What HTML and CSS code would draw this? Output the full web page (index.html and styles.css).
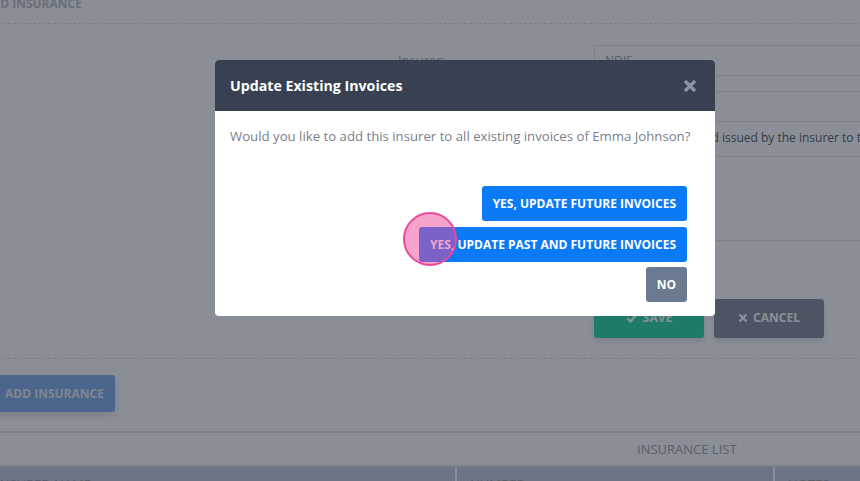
FILE: index.html
```html
<!DOCTYPE html>
<html>
<head>
<link rel="stylesheet" href="styles.css">
</head>
<body>
    <div class="page">
        <div class="panel-title">Add Insurance</div>

        <div class="form">
            <div class="row">
                <label class="label">Insurer:</label>
                <div class="field">
                    <div class="input">NDIS</div>
                </div>
            </div>
            <div class="row row-stack">
                <label class="label">Details:</label>
                <div class="field">
                    <div class="input"></div>
                    <div class="input input-join hint">Printed on the card issued by the insurer to the participant</div>
                    <div class="input input-join textarea"></div>
                </div>
            </div>
            <div class="row">
                <span></span>
                <div class="actions">
                    <span class="btn btn-save">
                        <svg width="12" height="12" viewBox="0 0 12 12"><path d="M1.5 6.5l3 3 6-7" fill="none" stroke="currentColor" stroke-width="2.4"/></svg>
                        Save
                    </span>
                    <span class="btn btn-cancel">
                        <svg width="10" height="10" viewBox="0 0 10 10"><path d="M1.5 1.5l7 7M8.5 1.5l-7 7" stroke="currentColor" stroke-width="2.4"/></svg>
                        Cancel
                    </span>
                </div>
            </div>
        </div>

        <div class="add-bar">
            <span class="btn btn-add">
                <svg width="9" height="9" viewBox="0 0 9 9"><path d="M4.5 0v9M0 4.5h9" stroke="currentColor" stroke-width="2.2"/></svg>
                Add Insurance
            </span>
        </div>

        <div class="list">
            <div class="list-caption">Insurance List</div>
            <div class="list-head">
                <div class="cell c1">Insured Name</div>
                <div class="cell c2">Number</div>
                <div class="cell c3">Notes</div>
            </div>
        </div>
    </div>

    <div class="backdrop"></div>

    <div class="modal">
        <div class="modal-header">
            <span class="modal-title">Update Existing Invoices</span>
            <svg class="modal-close" width="14" height="14" viewBox="0 0 14 14"><path d="M2 2l10 10M12 2L2 12" stroke="currentColor" stroke-width="3.2"/></svg>
        </div>
        <div class="modal-body">
            <p class="modal-text">Would you like to add this insurer to all existing invoices of Emma Johnson?</p>
            <div class="modal-buttons">
                <span class="mbtn mbtn-blue">Yes, update future invoices</span>
                <span class="mbtn mbtn-blue">Yes, update past and future invoices</span>
                <span class="mbtn mbtn-grey">No</span>
            </div>
        </div>
    </div>

    <div class="click-dot"></div>
</body>
</html>
```
FILE: styles.css
```css
body {
    margin: 0;
    background: #fff;
    font-family: "Open Sans", "Liberation Sans", sans-serif;
    overflow: hidden;
}
.page {
    width: 1100px;
    margin: -6px 0 0 -17px;
}
.panel-title {
    height: 29px;
    line-height: 19px;
    font-size: 12px;
    font-weight: bold;
    color: #bcc0c5;
    text-transform: uppercase;
    border-bottom: 1px dashed #dcdde0;
}
.form {
    padding-top: 21px;
}
.row {
    display: grid;
    grid-template-columns: 462px 1fr;
    column-gap: 149px;
}
.row-stack {
    margin-top: 15px;
}
.label {
    text-align: right;
    font-size: 13px;
    line-height: 31px;
    color: #9fa3a9;
}
.input {
    height: 29px;
    border: 1px solid #e3e4e7;
    font-size: 12px;
    line-height: 29px;
    padding: 0 10px;
    color: #9a9ea4;
}
.input-join {
    border-top: none;
}
.hint {
    height: 34px;
    line-height: 32px;
    font-size: 12px;
    padding-left: 16px;
    color: #55595f;
    white-space: nowrap;
    overflow: hidden;
}
.textarea {
    height: 83px;
}
.actions {
    display: flex;
    gap: 10px;
    padding-top: 58px;
}
.btn {
    display: inline-flex;
    align-items: center;
    justify-content: center;
    gap: 5px;
    font-size: 12px;
    font-weight: bold;
    text-transform: uppercase;
    border-radius: 3px;
    color: #fff;
}
.btn-save,
.btn-cancel {
    width: 110px;
    height: 39px;
    padding-bottom: 2px;
    box-sizing: border-box;
    box-shadow: 0 3px 6px rgba(0,0,0,0.12);
}
.btn-save {
    background: #28d8a4;
    color: #fff;
}
.btn-cancel {
    background: #848c9c;
    color: #fff;
}
.add-bar {
    margin-top: 20px;
    border-top: 1px dashed #dcdde0;
    padding: 16px 0 19px;
    border-bottom: 2px solid #dddee1;
}
.btn-add {
    height: 37px;
    padding: 0 11px 0 8px;
    background: #80acea;
    color: #e6ecf2;
    box-shadow: 0 4px 8px rgba(0,0,0,0.12);
}
.list-caption {
    height: 32px;
    line-height: 32px;
    font-size: 13px;
    text-transform: uppercase;
    color: #9ea4ae;
    padding-left: 654px;
}
.list-head {
    display: flex;
    background: #c3cdd9;
    border-top: 2px solid #e4e7eb;
    height: 40px;
}
.cell {
    font-size: 13px;
    text-transform: uppercase;
    color: #9aa0a8;
    padding: 8px 13px;
}
.c1 { width: 446px; }
.c2 { width: 290px; border-left: 2px solid #fff; }
.c3 { flex: 1; border-left: 2px solid #fff; }

.backdrop {
    position: fixed;
    inset: 0;
    background: rgba(22, 30, 46, 0.5);
}
.modal {
    position: fixed;
    left: 215px;
    top: 60px;
    width: 500px;
    background: #fff;
    border-radius: 4px;
    overflow: hidden;
}
.modal-header {
    height: 51px;
    background: #374152;
    display: flex;
    align-items: center;
    justify-content: space-between;
    padding: 0 18px 0 15px;
}
.modal-title {
    font-size: 14.2px;
    font-weight: bold;
    color: #fff;
}
.modal-close {
    color: #8b95a5;
}
.modal-body {
    padding: 16px 28px 14px 15px;
}
.modal-text {
    margin: 0;
    font-size: 13.2px;
    line-height: 18px;
    white-space: nowrap;
    color: #7a808c;
}
.modal-buttons {
    display: flex;
    flex-direction: column;
    align-items: flex-end;
    gap: 5.5px;
    margin-top: 41px;
}
.mbtn {
    height: 35px;
    line-height: 35px;
    padding: 0 11px;
    border-radius: 3px;
    font-size: 12px;
    font-weight: bold;
    text-transform: uppercase;
    color: #fff;
}
.mbtn-blue {
    background: #0b7af6;
}
.mbtn-grey {
    background: #6b7a90;
}
.click-dot {
    position: fixed;
    left: 403px;
    top: 212px;
    width: 50px;
    height: 50px;
    border-radius: 50%;
    border: 2px solid #ec4899;
    background: rgba(236, 72, 153, 0.5);
}
```
